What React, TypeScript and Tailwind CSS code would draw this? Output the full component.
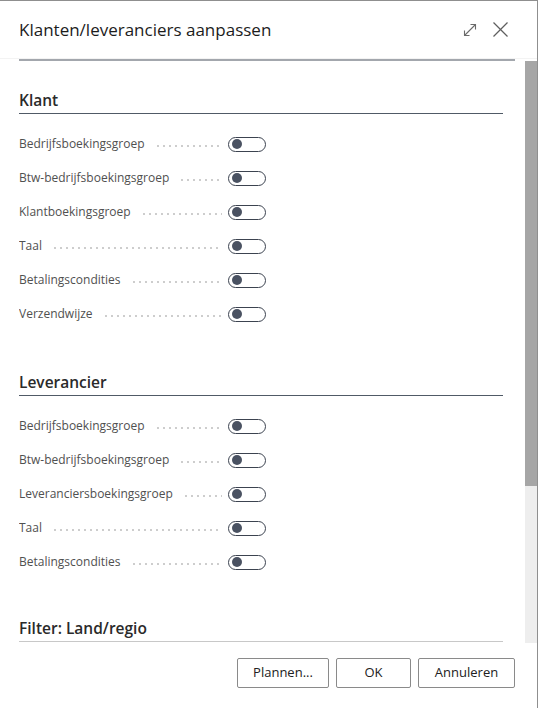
import React from 'react';

const klantFields = [
  'Bedrijfsboekingsgroep',
  'Btw-bedrijfsboekingsgroep',
  'Klantboekingsgroep',
  'Taal',
  'Betalingscondities',
  'Verzendwijze',
];

const leverancierFields = [
  'Bedrijfsboekingsgroep',
  'Btw-bedrijfsboekingsgroep',
  'Leveranciersboekingsgroep',
  'Taal',
  'Betalingscondities',
];

function Toggle() {
  return (
    <div className="flex h-[15px] w-[38px] shrink-0 items-center rounded-full border border-[#3c4350] px-[3px]">
      <div className="h-[10px] w-[10px] rounded-full bg-[#4a5262]" />
    </div>
  );
}

function FieldRow({ label }: { label: string }) {
  return (
    <div className="flex h-[34px] items-center">
      <div className="flex w-[203px] items-center overflow-hidden">
        <span className="shrink-0 whitespace-nowrap text-[12px] text-[#505050]">{label}</span>
        <span className="ml-[10px] mt-[4px] h-[2px] flex-1 bg-[radial-gradient(circle,#cccccc_0.7px,transparent_1px)] bg-[length:6px_2px] bg-repeat-x" />
      </div>
      <div className="ml-[6px]">
        <Toggle />
      </div>
    </div>
  );
}

function SectionHeading({ title, light }: { title: string; light?: boolean }) {
  return (
    <div
      className={
        'flex h-[26px] items-center border-b text-[15.5px] font-semibold text-[#2a2a2a] ' +
        (light ? 'border-[#c8c8c8]' : 'border-[#505a66]')
      }
    >
      {title}
    </div>
  );
}

export default function App() {
  return (
    <div
      className="flex h-[708px] w-[538px] flex-col overflow-hidden border-r border-t border-[#8f8f8f] bg-white"
      style={{ fontFamily: '"Segoe UI", "Open Sans", "Noto Sans", sans-serif' }}
    >
      {/* header */}
      <div className="flex h-[57px] shrink-0 items-center justify-between pl-[19px] pr-[28px]">
        <h1 className="text-[17px] text-[#1c1c1c]">Klanten/leveranciers aanpassen</h1>
        <div className="flex items-center gap-[14px]">
          <svg width="16" height="16" viewBox="0 0 16 16" fill="none" stroke="#6b6b6b" strokeWidth="1.1">
            <path d="M2.5 13.5 L13.5 2.5" />
            <path d="M8.5 2.5 H13.5 V7.5" />
            <path d="M2.5 8.5 V13.5 H7.5" />
          </svg>
          <svg width="17" height="17" viewBox="0 0 17 17" fill="none" stroke="#5f5f5f" strokeWidth="1.3">
            <path d="M1.5 1.5 L15.5 15.5" />
            <path d="M15.5 1.5 L1.5 15.5" />
          </svg>
        </div>
      </div>
      <div className="flex h-[3px] shrink-0 flex-col">
        <div className="h-px bg-[#f3f3f3]" />
        <div className="ml-[19px] mr-[22px] h-[2px] bg-[#a3a7ad]" />
      </div>

      {/* scroll area */}
      <div className="flex h-[582px] shrink-0">
        <div className="flex-1 overflow-hidden pl-[19px] pr-[22px] pt-[27px]">
          <SectionHeading title="Klant" />
          <div className="mt-[13px]">
            {klantFields.map((f) => (
              <FieldRow key={f} label={f} />
            ))}
          </div>
          <div className="mt-[39px]">
            <SectionHeading title="Leverancier" />
          </div>
          <div className="mt-[13px]">
            {leverancierFields.map((f) => (
              <FieldRow key={f} label={f} />
            ))}
          </div>
          <div className="mt-[37px]">
            <SectionHeading title="Filter: Land/regio" light />
          </div>
        </div>
        <div className="flex w-[12px] flex-col bg-[#eeeeee]">
          <div className="h-[425px] bg-[#a6a6a6]" />
        </div>
      </div>

      {/* footer */}
      <div className="flex flex-1 items-start justify-end gap-[7px] pr-[22px] pt-[15px]">
        <button className="h-[30px] w-[92px] rounded-[2px] border border-[#8a8a8a] text-[13px] text-[#212121]">
          Plannen...
        </button>
        <button className="h-[30px] w-[75px] rounded-[2px] border border-[#8a8a8a] text-[13px] text-[#212121]">
          OK
        </button>
        <button className="h-[30px] w-[97px] rounded-[2px] border border-[#8a8a8a] text-[13px] text-[#212121]">
          Annuleren
        </button>
      </div>
    </div>
  );
}
